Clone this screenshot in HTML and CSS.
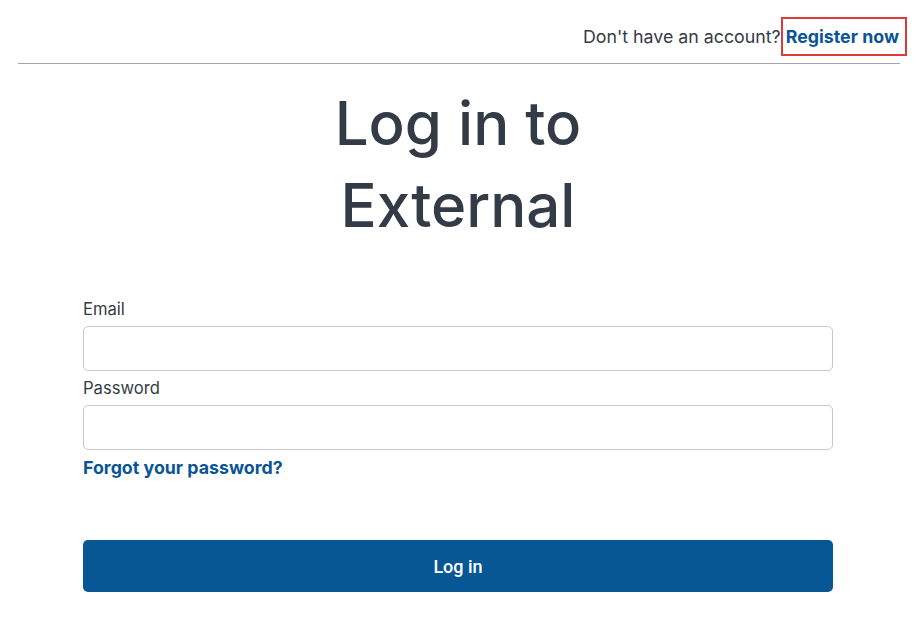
FILE: index.html
```html
<!DOCTYPE html>
<html lang="en">
<head>
<meta charset="utf-8">
<title>Log in to External</title>
<link rel="stylesheet" href="styles.css">
</head>
<body>
<header class="topbar">
  <span class="prompt">Don't have an account?</span><a class="register" href="#">Register now</a>
</header>
<main class="main">
  <h1 class="title">Log in to<br>External</h1>
  <form class="form">
    <label class="label" for="email">Email</label>
    <input class="input" id="email" type="email">
    <label class="label" for="password">Password</label>
    <input class="input" id="password" type="password">
    <a class="forgot" href="#">Forgot your password?</a>
    <button class="btn" type="button">Log in</button>
  </form>
</main>
</body>
</html>
```
FILE: styles.css
```css
html, body {
  margin: 0;
  padding: 0;
  background: #fff;
}
body {
  font-family: "Inter", "Open Sans", sans-serif;
  color: #333c46;
}
.topbar {
  margin: 0 18px;
  height: 64px;
  border-bottom: 1px solid #a3a7ad;
  display: flex;
  justify-content: flex-end;
  align-items: center;
  box-sizing: border-box;
  font-size: 17.8px;
  padding-top: 9px;
}
.prompt {
  color: #333c46;
}
.register {
  display: inline-block;
  color: #0a5596;
  font-weight: 700;
  text-decoration: none;
  margin-left: 2px;
  margin-right: -5px;
  padding: 7px 6px 6px 3px;
  outline: 2px solid #e0393b;
  outline-offset: 0;
  line-height: 22px;
}
.main {
  width: 750px;
  margin-left: calc(50% - 376px);
  display: flex;
  flex-direction: column;
  align-items: stretch;
}
.title {
  margin: 18px 0 0;
  font-size: 60px;
  font-weight: 500;
  line-height: 82px;
  text-align: center;
  color: #333c46;
}
.form {
  display: flex;
  flex-direction: column;
  margin-top: 52px;
}
.label {
  font-size: 16.6px;
  line-height: 22px;
  margin-bottom: 6px;
}
.input {
  height: 45px;
  box-sizing: border-box;
  border: 1px solid #c9c9c9;
  border-radius: 5px;
  margin: 0 0 6px;
  font-size: 16px;
}
.forgot {
  font-size: 17.8px;
  font-weight: 700;
  color: #0a5596;
  text-decoration: none;
  line-height: 22px;
  margin-top: 1px;
  align-self: flex-start;
}
.btn {
  margin-top: 61px;
  height: 52px;
  border: none;
  border-radius: 5px;
  background: #075794;
  color: #fff;
  font-family: "Roboto", sans-serif;
  font-size: 18px;
  font-weight: 500;
}
```
